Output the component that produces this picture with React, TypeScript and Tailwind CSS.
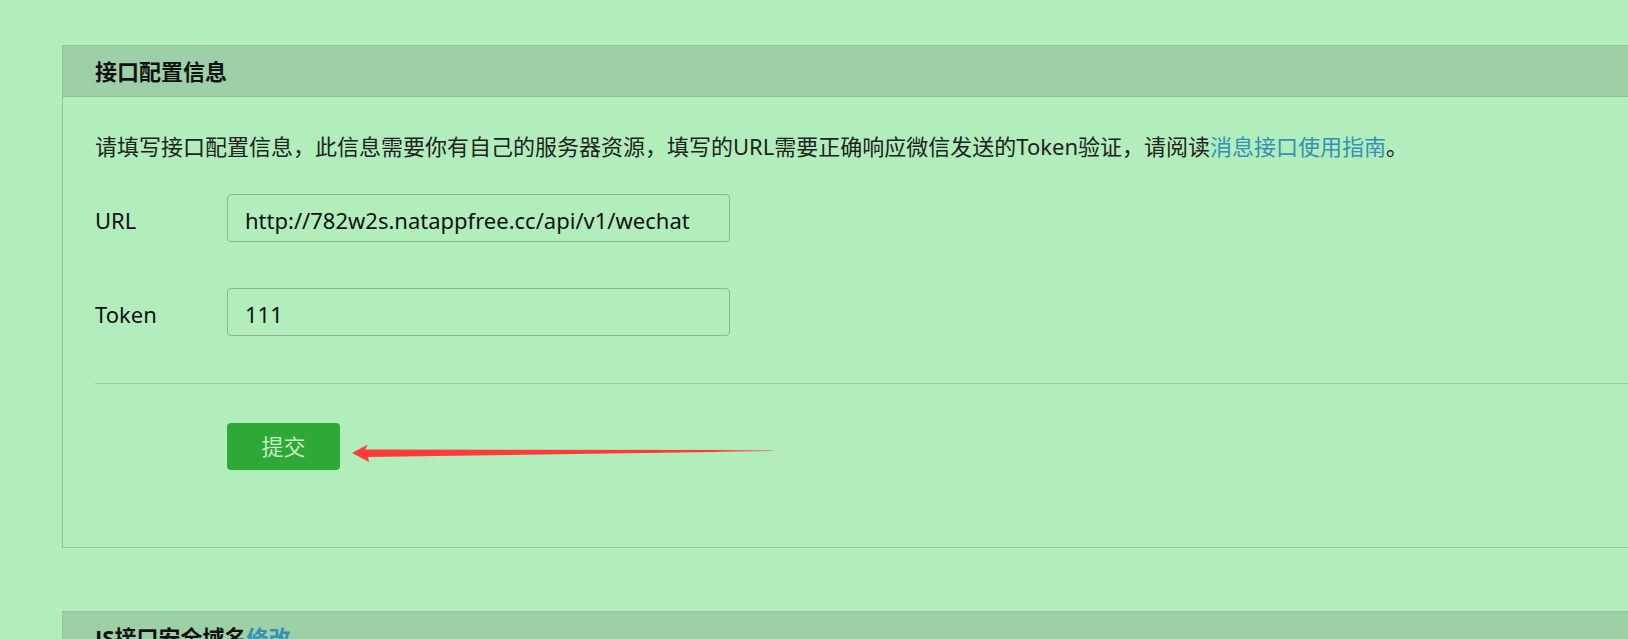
import React from "react";

const FONT = "font-['Noto_Sans','Noto_Sans_CJK_SC',sans-serif]";

export default function App() {
  return (
    <div className={`relative w-full h-[639px] overflow-hidden bg-[#b1eebb] text-[#1a1a1a] ${FONT}`}>
      <div className="pt-[45px] pl-[62px]">
        {/* Panel 1 */}
        <div className="w-[1620px] border-t border-l border-b border-[#93c39b]">
          <div className="h-[51px] bg-[#9dd0a6] border-b border-[#8fbf98] flex items-center pl-[32px]">
            <span className="text-[22px] font-bold text-[#111]">接口配置信息</span>
          </div>
          <div className="pl-[32px] pt-[34px] pb-[77px]">
            <p className="text-[22px] leading-[30px] text-[#222] whitespace-nowrap">
              请填写接口配置信息，此信息需要你有自己的服务器资源，填写的URL需要正确响应微信发送的Token验证，请阅读
              <span className="text-[#3590b5]">消息接口使用指南</span>。
            </p>
            <div className="mt-[33px] flex items-center">
              <label className="w-[132px] pt-[4px] text-[22px] text-[#111]">URL</label>
              <div className="w-[503px] h-[48px] border border-[#8fb393] rounded-[4px] flex items-center pl-[17px] pt-[4px] text-[22px] text-[#111]">
                http://782w2s.natappfree.cc/api/v1/wechat
              </div>
            </div>
            <div className="mt-[46px] flex items-center">
              <label className="w-[132px] pt-[4px] text-[22px] text-[#111]">Token</label>
              <div className="w-[503px] h-[48px] border border-[#8fb393] rounded-[4px] flex items-center pl-[17px] pt-[4px] text-[22px] text-[#111]">
                111
              </div>
            </div>
            <div className="mt-[47px] h-px bg-[#9ccda5]" />
            <div className="mt-[39px] pl-[132px]">
              <button className="w-[113px] h-[47px] rounded-[4px] bg-[#2ea836] text-[22px] text-[#c8efc6]">
                提交
              </button>
            </div>
          </div>
        </div>

        {/* Panel 2 */}
        <div className="mt-[63px] w-[1620px] border-t border-l border-[#93c39b]">
          <div className="h-[51px] bg-[#9dd0a6] border-b border-[#8fbf98] flex items-center pl-[32px]">
            <span className="text-[22px] font-bold text-[#111]">
              JS接口安全域名<span className="text-[#3590b5]">修改</span>
            </span>
          </div>
        </div>
      </div>

      {/* Annotation arrow */}
      <svg className="absolute left-[340px] top-[440px]" width="440" height="30" viewBox="0 0 440 30">
        <defs>
          <linearGradient id="tail" x1="0" x2="1" y1="0" y2="0">
            <stop offset="0" stopColor="#ff3a3a" />
            <stop offset="0.85" stopColor="#ff3a3a" />
            <stop offset="1" stopColor="#ff3a3a" stopOpacity="0.4" />
          </linearGradient>
        </defs>
        <polygon
          points="12,13 28,4.5 25,9.5 433,10 433,11 28,17 29,22"
          fill="url(#tail)"
        />
      </svg>
    </div>
  );
}
